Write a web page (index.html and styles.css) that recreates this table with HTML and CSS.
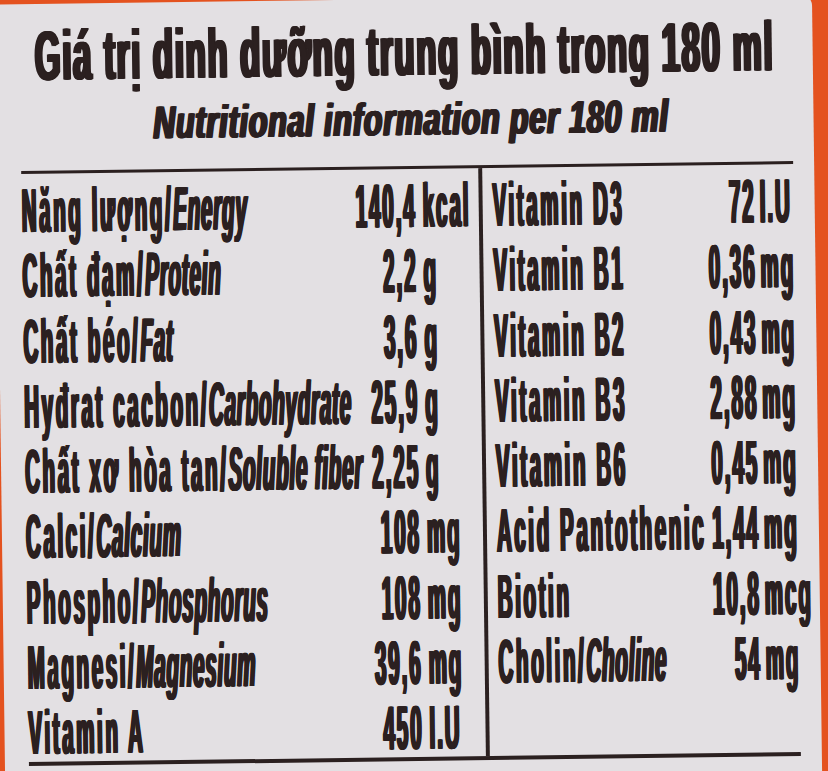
FILE: index.html
```html
<!DOCTYPE html>
<html lang="vi">
<head>
<meta charset="utf-8">
<title>Giá trị dinh dưỡng</title>
<link rel="stylesheet" href="styles.css">
</head>
<body>
<div class="label">
  <header class="title">
    <h1 class="title-main">Giá trị dinh dưỡng trung bình trong 180 ml</h1>
    <h2 class="title-sub">Nutritional information per 180 ml</h2>
  </header>
  <section class="table">
    <div class="cols">
      <div class="col col-left">
        <div class="row"><span class="name">Năng lượng/<i>Energy</i></span><span class="num">140,4</span><span class="unit">kcal</span></div>
        <div class="row"><span class="name">Chất đạm/<i>Protein</i></span><span class="num">2,2</span><span class="unit">g</span></div>
        <div class="row"><span class="name">Chất béo/<i>Fat</i></span><span class="num">3,6</span><span class="unit">g</span></div>
        <div class="row"><span class="name">Hyđrat cacbon/<i>Carbohydrate</i></span><span class="num">25,9</span><span class="unit">g</span></div>
        <div class="row"><span class="name">Chất xơ hòa tan/<i>Soluble fiber</i></span><span class="num">2,25</span><span class="unit">g</span></div>
        <div class="row"><span class="name">Calci/<i>Calcium</i></span><span class="num">108</span><span class="unit">mg</span></div>
        <div class="row"><span class="name">Phospho/<i>Phosphorus</i></span><span class="num">108</span><span class="unit">mg</span></div>
        <div class="row"><span class="name">Magnesi/<i>Magnesium</i></span><span class="num">39,6</span><span class="unit">mg</span></div>
        <div class="row"><span class="name">Vitamin A</span><span class="num">450</span><span class="unit">I.U</span></div>
      </div>
      <div class="col col-right">
        <div class="row"><span class="name">Vitamin D3</span><span class="num">72</span><span class="unit">I.U</span></div>
        <div class="row"><span class="name">Vitamin B1</span><span class="num">0,36</span><span class="unit">mg</span></div>
        <div class="row"><span class="name">Vitamin B2</span><span class="num">0,43</span><span class="unit">mg</span></div>
        <div class="row"><span class="name">Vitamin B3</span><span class="num">2,88</span><span class="unit">mg</span></div>
        <div class="row"><span class="name">Vitamin B6</span><span class="num">0,45</span><span class="unit">mg</span></div>
        <div class="row"><span class="name">Acid Pantothenic</span><span class="num">1,44</span><span class="unit">mg</span></div>
        <div class="row"><span class="name">Biotin</span><span class="num">10,8</span><span class="unit">mcg</span></div>
        <div class="row"><span class="name">Cholin/<i>Choline</i></span><span class="num">54</span><span class="unit">mg</span></div>
      </div>
    </div>
  </section>
</div>
</body>
</html>
```
FILE: styles.css
```css
* {
  box-sizing: border-box;
  margin: 0;
  padding: 0;
}

html,
body {
  width: 828px;
  height: 771px;
  overflow: hidden;
}

body {
  background: #e4521f;
  font-family: "Liberation Sans", Arial, sans-serif;
  font-weight: 700;
  color: #2b2020;
}

.label {
  --s: 0.33;
  width: 817px;
  height: 781px;
  margin-top: -1px;
  padding-top: 16px;
  background: #e3e0e3;
  border-top-right-radius: 12px;
  transform: rotate(-0.75deg);
  transform-origin: 414px 386px;
}

.title {
  display: flex;
  flex-direction: column;
  align-items: center;
}

.title-main {
  flex: none;
  font-size: 70px;
  line-height: 72px;
  font-weight: 700;
  letter-spacing: 3.6px;
  white-space: nowrap;
  transform: scaleX(0.471);
  text-shadow: -3.4px 0 currentColor, -1.7px 0 currentColor, 1.7px 0 currentColor, 3.4px 0 currentColor;
}

.title-sub {
  flex: none;
  margin-top: 7px;
  margin-left: 13px;
  font-size: 46px;
  line-height: 50px;
  font-weight: 700;
  font-style: italic;
  letter-spacing: 1.5px;
  white-space: nowrap;
  transform: scaleX(0.655);
  text-shadow: -2px 0 currentColor, -1px 0 currentColor, 1px 0 currentColor, 2px 0 currentColor;
}

.table {
  width: 772px;
  margin: 22px 0 0 24px;
  border-top: 3px solid #2b2020;
  border-bottom: 4px solid #2b2020;
}

.cols {
  display: flex;
  width: calc(772px / var(--s));
  transform: scaleX(var(--s));
  transform-origin: 0 0;
}

.col {
  display: flex;
  flex-direction: column;
  row-gap: 7.3px;
  padding-top: 8px;
}

.col-left {
  flex: none;
  width: calc(457px / var(--s));
}

.col-right {
  flex: 1;
  border-left: calc(4px / var(--s)) solid #2b2020;
  padding-left: calc(10px / var(--s));
}

.row {
  display: grid;
  column-gap: calc(8px / var(--s));
  grid-template-columns: 1fr auto calc(56px / var(--s));
  font-size: 62px;
  line-height: 58px;
  letter-spacing: 6px;
  white-space: nowrap;
  text-shadow: -3px 0 currentColor, -1.5px 0 currentColor, 1.5px 0 currentColor, 3px 0 currentColor;
}

.col-right .row {
  column-gap: calc(6px / var(--s));
  grid-template-columns: 1fr auto calc(43px / var(--s));
}

.name {
  letter-spacing: 8px;
}

.name i {
  font-style: italic;
  letter-spacing: 2.5px;
}

.num {
  text-align: right;
  margin-right: -6px;
}

.unit {
  text-align: left;
}
```
